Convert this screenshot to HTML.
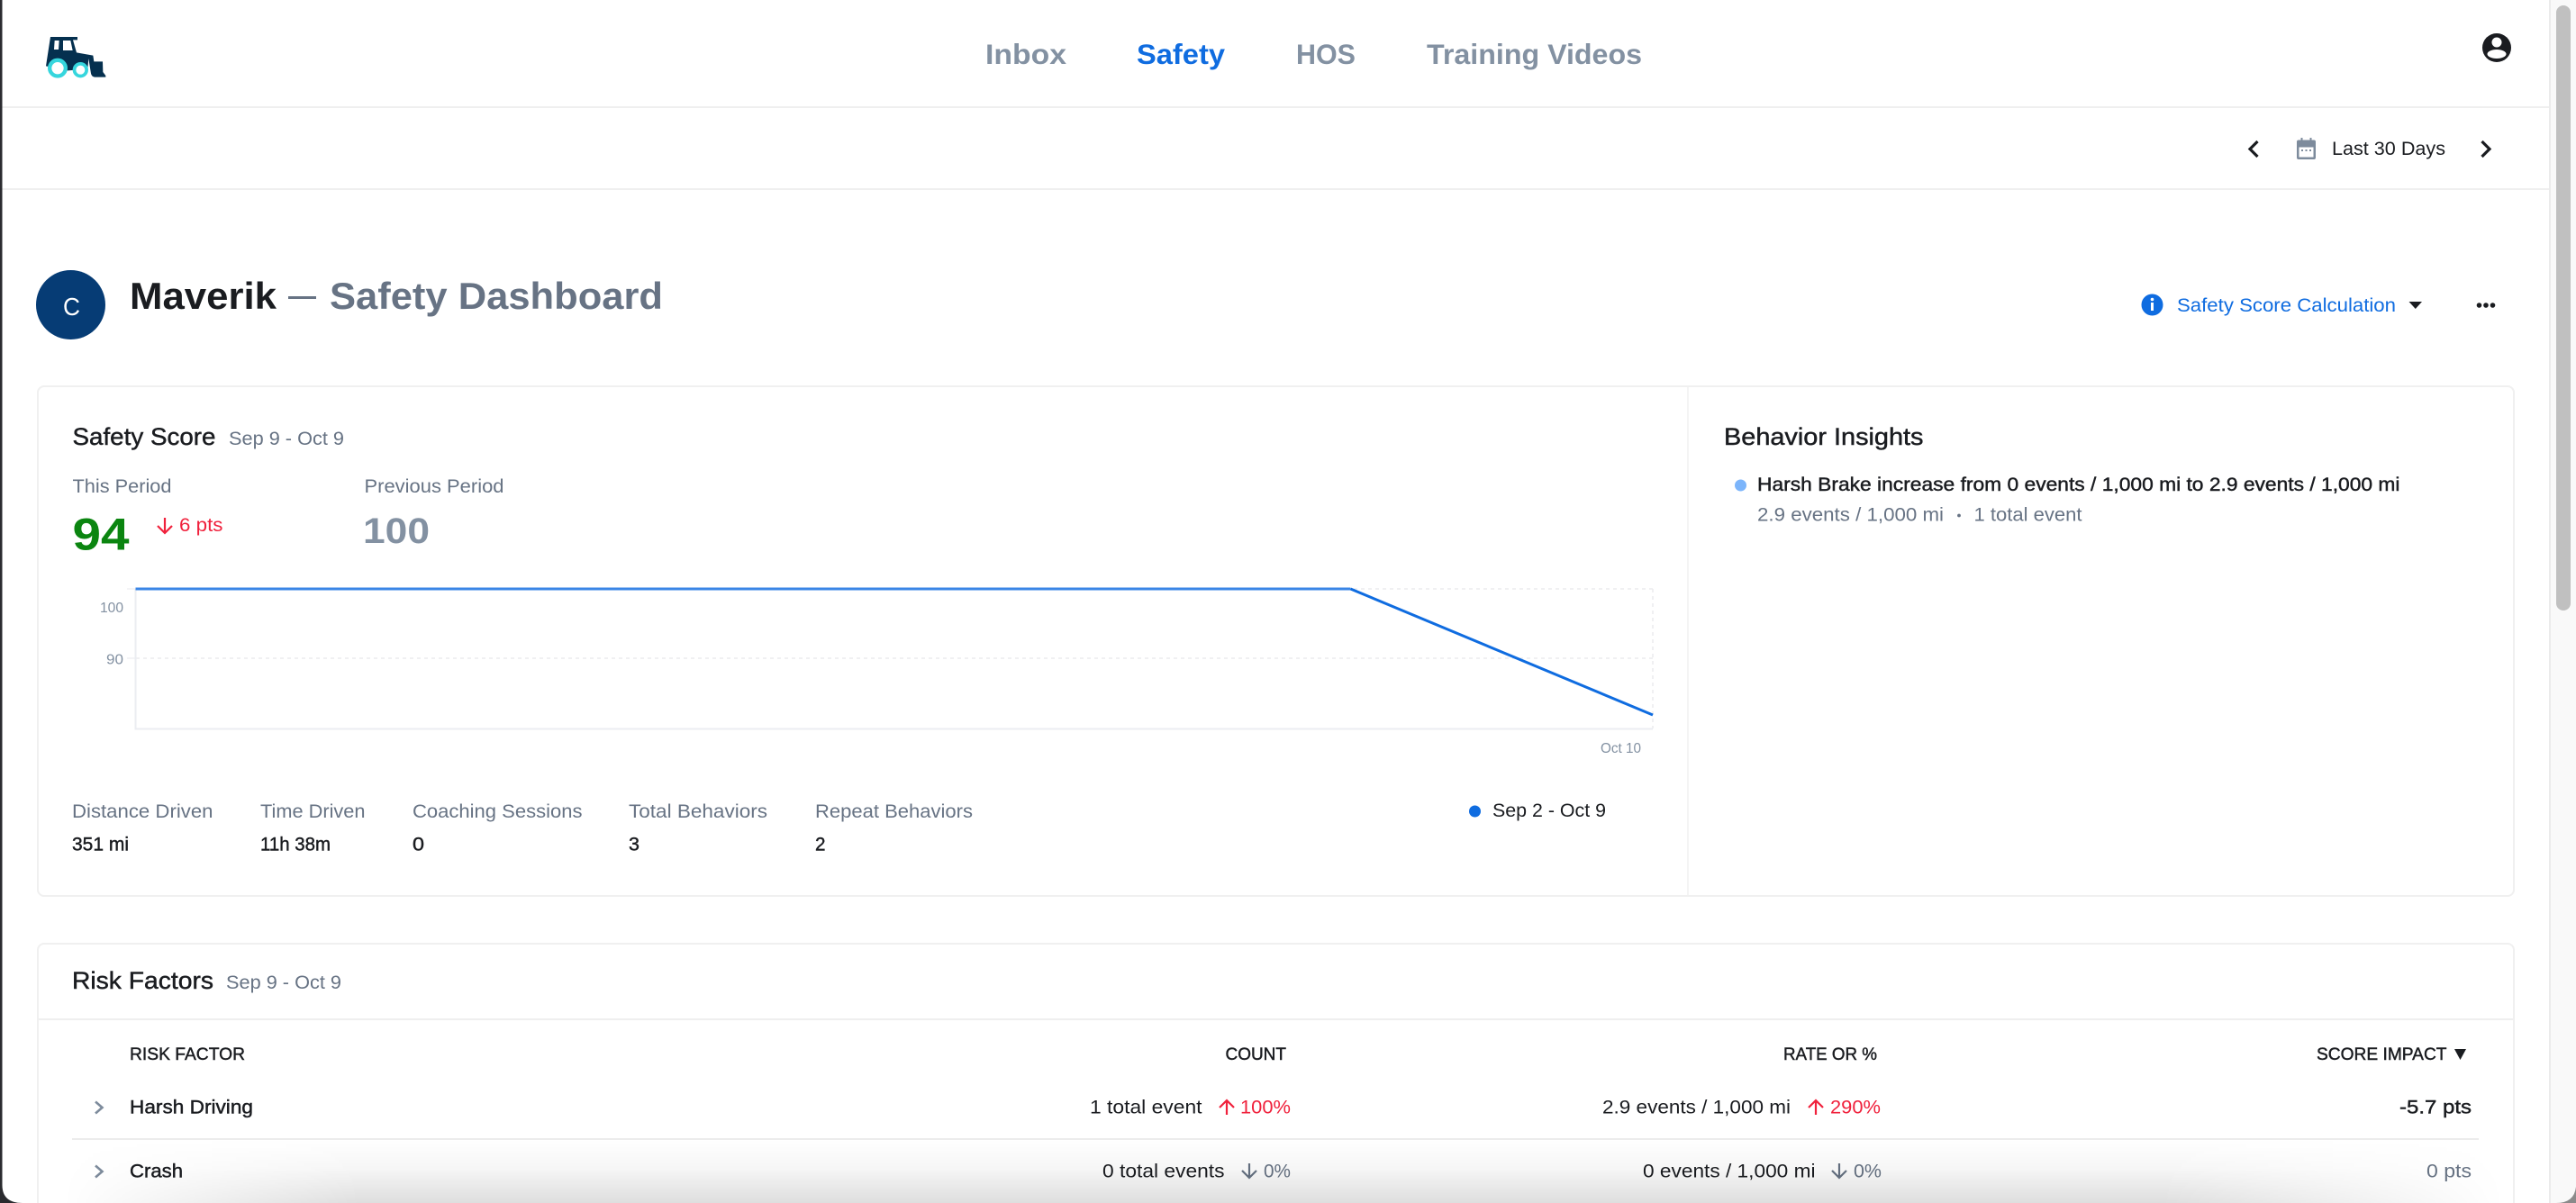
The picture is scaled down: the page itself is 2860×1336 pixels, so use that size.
<!DOCTYPE html>
<html lang="en">
<head>
<meta charset="utf-8">
<title>Maverik - Safety Dashboard</title>
<style>
html,body{margin:0;padding:0;width:2860px;height:1336px;overflow:hidden;background:#fff;}
body{position:relative;font-family:"Liberation Sans",sans-serif;}
.abs{position:absolute;box-sizing:border-box;}
.card{border:2px solid #f0f0f0;background:#fff;}
svg{position:absolute;left:0;top:0;}
text{font-family:"Liberation Sans",sans-serif;}
.d{fill:#1a1c20}
.g{fill:#677384}
.l{fill:#8391a2}
.r{fill:#f0213c}
.b{fill:#0f6ce0}
.m{stroke-width:.45;paint-order:stroke;}
.m.d{stroke:#1a1c20}
.s21{font-size:21.5px}
.s26{font-size:26.5px}
.s19{font-size:19px}
.s16{font-size:16px}
.nav{font-size:31.5px;font-weight:700}
</style>
</head>
<body>
<div class="abs" style="left:2830px;top:0;width:30px;height:1336px;background:#f9f9f9;border-left:2px solid #ebebeb"></div>
<div class="abs" style="left:2838px;top:6px;width:16px;height:672px;background:#c0c0c0;border-radius:8px"></div>
<div class="abs" style="left:0;top:118px;width:2830px;height:2px;background:#efefef"></div>
<div class="abs" style="left:0;top:209px;width:2830px;height:2px;background:#efefef"></div>
<div class="abs card" style="left:41px;top:428px;width:2751px;height:568px;border-radius:8px"></div>
<div class="abs" style="left:1873px;top:430px;width:2px;height:564px;background:#f4f4f4"></div>
<div class="abs card" style="left:41px;top:1047px;width:2751px;height:320px;border-radius:8px"></div>
<div class="abs" style="left:43px;top:1131px;width:2747px;height:2px;background:#efefef"></div>
<div class="abs" style="left:80px;top:1264px;width:2672px;height:2px;background:#ececec"></div>

<svg width="2860" height="1336" viewBox="0 0 2860 1336" xmlns="http://www.w3.org/2000/svg">
  <!-- logo -->
  <g transform="translate(20,10) scale(.3333)">
    <path fill="#05304f" d="M108,93H198V103H183L195,145L250,155L253,175H282L283,210L292,222V227H255Q245,225 243,215L235,165L232,200L165,205L93,190Z"/>
    <path fill="#fff" d="M122,105H137L135,135H120Z M150,105H175L182,138H150Z"/>
    <circle cx="132" cy="197" r="26.5" fill="#fff" stroke="#36d6dd" stroke-width="13"/>
    <circle cx="208" cy="203" r="20.5" fill="#fff" stroke="#36d6dd" stroke-width="11"/>
  </g>

  <!-- nav -->
  <text class="nav l" x="1094" y="71" textLength="90" lengthAdjust="spacingAndGlyphs">Inbox</text>
  <text class="nav b" x="1262" y="71" textLength="98" lengthAdjust="spacingAndGlyphs">Safety</text>
  <text class="nav l" x="1439" y="71" textLength="66" lengthAdjust="spacingAndGlyphs">HOS</text>
  <text class="nav l" x="1584" y="71" textLength="239" lengthAdjust="spacingAndGlyphs">Training Videos</text>

  <!-- user icon -->
  <circle cx="2772" cy="53" r="16" fill="#1a1c20"/>
  <circle cx="2772" cy="47" r="5.5" fill="#fff"/>
  <ellipse cx="2772" cy="60" rx="10.5" ry="5" fill="#fff"/>

  <!-- date bar -->
  <path d="M2506.5,157L2498,165.5L2506.5,174" fill="none" stroke="#1a1c20" stroke-width="3.2"/>
  <path d="M2552,155.5h2.5v-2.5h2v2.5h8v-2.5h2v2.5h2.5a2,2 0 0 1 2,2v17.5a2,2 0 0 1 -2,2h-17a2,2 0 0 1 -2,-2v-17.5a2,2 0 0 1 2,-2z" fill="#7d8b9c"/>
  <rect x="2552.5" y="163.5" width="16" height="11" fill="#fff"/>
  <rect x="2555" y="166" width="2" height="2" fill="#7d8b9c"/><rect x="2559.5" y="166" width="2" height="2" fill="#7d8b9c"/><rect x="2564" y="166" width="2" height="2" fill="#7d8b9c"/>
  <text class="d s21" x="2589" y="172" textLength="126" lengthAdjust="spacingAndGlyphs">Last 30 Days</text>
  <path d="M2755.5,157L2764,165.5L2755.5,174" fill="none" stroke="#1a1c20" stroke-width="3.2"/>

  <!-- title -->
  <circle cx="78.5" cy="338.5" r="38.5" fill="#063c75"/>
  <text x="70" y="350" font-size="28" fill="#fff" textLength="19" lengthAdjust="spacingAndGlyphs">C</text>
  <text x="144" y="343" font-size="41.5" font-weight="700" fill="#1a1c20" textLength="163" lengthAdjust="spacingAndGlyphs">Maverik</text>
  <rect x="320" y="329" width="31" height="3" fill="#677384"/>
  <text x="366" y="343" font-size="41.5" font-weight="700" fill="#677384" textLength="370" lengthAdjust="spacingAndGlyphs">Safety Dashboard</text>

  <!-- calc -->
  <circle cx="2389.5" cy="338.5" r="12" fill="#0f6ce0"/>
  <circle cx="2389.5" cy="332.5" r="1.8" fill="#fff"/>
  <rect x="2388" y="336" width="3" height="9" fill="#fff"/>
  <text class="b s21" x="2417" y="346" textLength="243" lengthAdjust="spacingAndGlyphs">Safety Score Calculation</text>
  <polygon points="2674.5,335 2689,335 2681.75,343" fill="#1a1c20"/>
  <circle cx="2752.5" cy="339" r="2.8" fill="#1a1c20"/><circle cx="2760" cy="339" r="2.8" fill="#1a1c20"/><circle cx="2767.5" cy="339" r="2.8" fill="#1a1c20"/>

  <!-- safety score card -->
  <text class="d m s26" x="80.5" y="494" textLength="159" lengthAdjust="spacingAndGlyphs">Safety Score</text>
  <text class="g s21" x="254" y="494" textLength="128" lengthAdjust="spacingAndGlyphs">Sep 9 - Oct 9</text>
  <text class="g s21" x="80.5" y="547" textLength="110" lengthAdjust="spacingAndGlyphs">This Period</text>
  <text class="g s21" x="404.5" y="547" textLength="155" lengthAdjust="spacingAndGlyphs">Previous Period</text>
  <text x="80.5" y="610.5" font-size="50" font-weight="700" fill="#0b8510" textLength="63" lengthAdjust="spacingAndGlyphs">94</text>
  <path d="M183,575V592M175,584L183,592L191,584" fill="none" stroke="#f0213c" stroke-width="2.2"/>
  <text class="r s21" x="199" y="590" textLength="48.5" lengthAdjust="spacingAndGlyphs">6 pts</text>
  <text x="403" y="603" font-size="40" font-weight="700" fill="#8391a2" textLength="74" lengthAdjust="spacingAndGlyphs">100</text>

  <!-- chart -->
  <path d="M141,654H150M141,731H150" stroke="#f0f1f4" stroke-width="1.5" fill="none"/>
  <path d="M151,654H1835M151,731H1835M1835,654V809" stroke="#ececee" stroke-width="1.5" stroke-dasharray="4 4" fill="none"/>
  <path d="M150.5,654V809.5H1835" stroke="#ebedf2" stroke-width="2" fill="none"/>
  <path d="M150.5,654H1499.5" stroke="#3a85e6" stroke-width="3" fill="none"/>
  <path d="M1499.5,654L1835,794" stroke="#0f6ce0" stroke-width="3" fill="none"/>
  <text class="l s16" x="111" y="680" textLength="26" lengthAdjust="spacingAndGlyphs">100</text>
  <text class="l s16" x="118" y="737.5" textLength="19" lengthAdjust="spacingAndGlyphs">90</text>
  <text class="l s16" x="1777" y="836" textLength="45" lengthAdjust="spacingAndGlyphs">Oct 10</text>

  <!-- stats -->
  <text class="g s21" x="80" y="908" textLength="156.5" lengthAdjust="spacingAndGlyphs">Distance Driven</text>
  <text class="g s21" x="289" y="908" textLength="116.5" lengthAdjust="spacingAndGlyphs">Time Driven</text>
  <text class="g s21" x="458" y="908" textLength="188.5" lengthAdjust="spacingAndGlyphs">Coaching Sessions</text>
  <text class="g s21" x="698" y="908" textLength="154" lengthAdjust="spacingAndGlyphs">Total Behaviors</text>
  <text class="g s21" x="905" y="908" textLength="175" lengthAdjust="spacingAndGlyphs">Repeat Behaviors</text>
  <text class="d m s21" x="80" y="944.5" textLength="63" lengthAdjust="spacingAndGlyphs">351 mi</text>
  <text class="d m s21" x="289" y="944.5" textLength="78" lengthAdjust="spacingAndGlyphs">11h 38m</text>
  <text class="d m s21" x="458" y="944.5" textLength="13" lengthAdjust="spacingAndGlyphs">0</text>
  <text class="d m s21" x="698" y="944.5" textLength="12" lengthAdjust="spacingAndGlyphs">3</text>
  <text class="d m s21" x="905" y="944.5" textLength="11.5" lengthAdjust="spacingAndGlyphs">2</text>
  <circle cx="1637.5" cy="901" r="6.5" fill="#0f6ce0"/>
  <text class="d s21" x="1657" y="907" textLength="126" lengthAdjust="spacingAndGlyphs">Sep 2 - Oct 9</text>

  <!-- behavior insights -->
  <text class="d m s26" x="1914" y="494" textLength="221.5" lengthAdjust="spacingAndGlyphs">Behavior Insights</text>
  <circle cx="1932.5" cy="539" r="6.5" fill="#7cb5fb"/>
  <text class="d m s21" x="1951" y="545" textLength="713.5" lengthAdjust="spacingAndGlyphs">Harsh Brake increase from 0 events / 1,000 mi to 2.9 events / 1,000 mi</text>
  <text class="g s21" x="1951" y="578.5" textLength="207" lengthAdjust="spacingAndGlyphs">2.9 events / 1,000 mi</text>
  <circle cx="2175" cy="572.5" r="1.9" fill="#677384"/>
  <text class="g s21" x="2191.5" y="578.5" textLength="120" lengthAdjust="spacingAndGlyphs">1 total event</text>

  <!-- risk factors -->
  <text class="d m s26" x="80" y="1098" textLength="157" lengthAdjust="spacingAndGlyphs">Risk Factors</text>
  <text class="g s21" x="251" y="1098" textLength="128" lengthAdjust="spacingAndGlyphs">Sep 9 - Oct 9</text>
  <text class="d m s19" x="144" y="1177" textLength="128" lengthAdjust="spacingAndGlyphs">RISK FACTOR</text>
  <text class="d m s19" x="1360.5" y="1177" textLength="67.5" lengthAdjust="spacingAndGlyphs">COUNT</text>
  <text class="d m s19" x="1980" y="1177" textLength="104" lengthAdjust="spacingAndGlyphs">RATE OR %</text>
  <text class="d m s19" x="2572" y="1177" textLength="144.5" lengthAdjust="spacingAndGlyphs">SCORE IMPACT</text>
  <polygon points="2725,1165 2738,1165 2731.5,1177" fill="#1a1c20"/>

  <path d="M106,1223.5L113.5,1230L106,1236.5" fill="none" stroke="#7d8b9c" stroke-width="2.6"/>
  <text class="d m s21" x="144" y="1236.5" textLength="137" lengthAdjust="spacingAndGlyphs">Harsh Driving</text>
  <text class="d s21" x="1210" y="1236.5" textLength="124.5" lengthAdjust="spacingAndGlyphs">1 total event</text>
  <path d="M1362,1238V1222M1354,1230L1362,1222L1370,1230" fill="none" stroke="#f0213c" stroke-width="2.2"/>
  <text class="r s21" x="1377" y="1236.5" textLength="56" lengthAdjust="spacingAndGlyphs">100%</text>
  <text class="d s21" x="1779" y="1236.5" textLength="209" lengthAdjust="spacingAndGlyphs">2.9 events / 1,000 mi</text>
  <path d="M2016,1238V1222M2008,1230L2016,1222L2024,1230" fill="none" stroke="#f0213c" stroke-width="2.2"/>
  <text class="r s21" x="2032" y="1236.5" textLength="56" lengthAdjust="spacingAndGlyphs">290%</text>
  <text class="d m s21" x="2664" y="1236.5" textLength="80" lengthAdjust="spacingAndGlyphs">-5.7 pts</text>

  <path d="M106,1294.5L113.5,1301L106,1307.5" fill="none" stroke="#7d8b9c" stroke-width="2.6"/>
  <text class="d m s21" x="144" y="1307.5" textLength="59" lengthAdjust="spacingAndGlyphs">Crash</text>
  <text class="d s21" x="1224" y="1307.5" textLength="135.5" lengthAdjust="spacingAndGlyphs">0 total events</text>
  <path d="M1387,1292V1308M1379,1300L1387,1308L1395,1300" fill="none" stroke="#677384" stroke-width="2.2"/>
  <text class="g s21" x="1403" y="1307.5" textLength="30" lengthAdjust="spacingAndGlyphs">0%</text>
  <text class="d s21" x="1824" y="1307.5" textLength="191.5" lengthAdjust="spacingAndGlyphs">0 events / 1,000 mi</text>
  <path d="M2042,1292V1308M2034,1300L2042,1308L2050,1300" fill="none" stroke="#677384" stroke-width="2.2"/>
  <text class="g s21" x="2058" y="1307.5" textLength="31" lengthAdjust="spacingAndGlyphs">0%</text>
  <text class="g s21" x="2694" y="1307.5" textLength="50" lengthAdjust="spacingAndGlyphs">0 pts</text>
</svg>

<div class="abs" style="left:0;top:1266px;width:2860px;height:70px;background:linear-gradient(to bottom,rgba(0,0,0,0),rgba(0,0,0,.035) 45%,rgba(0,0,0,.13));-webkit-mask-image:linear-gradient(to right,transparent 70px,#000 400px,#000 2400px,transparent 2780px);mask-image:linear-gradient(to right,transparent 70px,#000 400px,#000 2400px,transparent 2780px)"></div>

<svg width="2860" height="1336" viewBox="0 0 2860 1336" xmlns="http://www.w3.org/2000/svg">
  <path d="M0,0H2.5V1316Q2.5,1336 25,1336H0Z" fill="#2a2b2f"/>
  <path d="M2860,1318Q2858,1336 2838,1336H2860Z" fill="#8a8a8a"/>
</svg>
</body>
</html>
